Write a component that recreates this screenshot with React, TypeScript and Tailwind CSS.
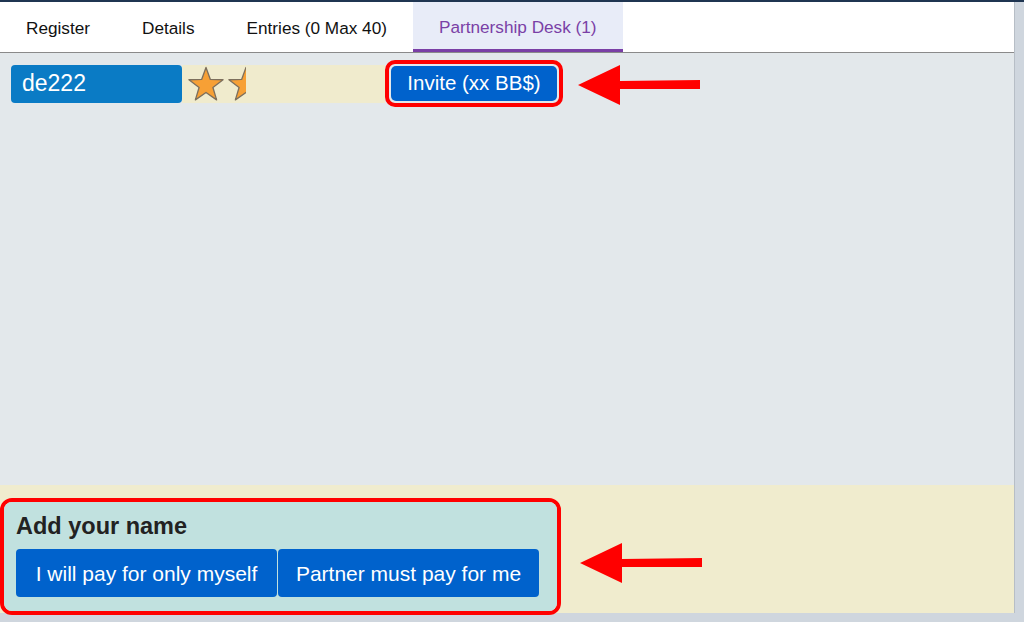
import { ReactNode } from "react";

const tabs = [
  { label: "Register", active: false },
  { label: "Details", active: false },
  { label: "Entries (0 Max 40)", active: false },
  { label: "Partnership Desk (1)", active: true },
];

function Star({ className = "" }: { className?: string }) {
  return (
    <svg viewBox="0 0 40 38" className={className}>
      <polygon
        points="20,1.5 24.6,14.2 38,14.5 27.3,22.7 31.2,35.8 20,28 8.8,35.8 12.7,22.7 2,14.5 15.4,14.2"
        fill="#f7a035"
        stroke="#7d6f5c"
        strokeWidth="1.4"
        strokeLinejoin="round"
      />
    </svg>
  );
}

function RedArrow({ className = "" }: { className?: string }) {
  return (
    <svg viewBox="0 0 126 44" className={className}>
      <polygon points="2,22 44,2 44,18 124,17 124,26 44,26 44,42" fill="#ff0000" />
    </svg>
  );
}

function PayButton({ children }: { children: ReactNode }) {
  return (
    <button className="h-[48px] w-[261px] rounded-[4px] bg-[#0062cc] text-white text-[21px]">
      {children}
    </button>
  );
}

export default function App() {
  return (
    <div
      className="relative w-[1024px] h-[622px] overflow-hidden bg-[#cfd6de] flex flex-col"
      style={{ fontFamily: '"Liberation Sans", Arial, sans-serif' }}
    >
      <div className="h-[2px] bg-[#1f3551] shrink-0" />

      <div className="flex flex-1">
        <div className="w-[1015px] flex flex-col border-r border-[#b7bec6]">
          {/* tab strip */}
          <div className="h-[51px] bg-white flex border-b border-[#8a8a8a] shrink-0">
            {tabs.map((t) => (
              <div
                key={t.label}
                className={
                  t.active
                    ? "px-[26px] flex items-center text-[17.2px] text-[#7a3fa6] bg-[#e8ecf8] border-b-[3px] border-[#7a3fa6] pt-[5px]"
                    : "px-[26px] flex items-center text-[17.2px] text-[#111] pt-[3px]"
                }
              >
                {t.label}
              </div>
            ))}
          </div>

          {/* partner list */}
          <div className="flex-1 bg-[#e3e8eb] pt-[7px] pl-[11px]">
            <div className="flex items-center">
              <div className="w-[171px] h-[38px] rounded-[4px] bg-[#0a7bc5] text-white text-[23px] pl-[11px] flex items-center">
                de222
              </div>
              <div className="w-[203px] h-[38px] bg-[#f0ebcd] flex items-center pl-[5px] gap-[2px]">
                <Star className="w-[38px] h-[36px]" />
                <div className="w-[19px] h-[36px] overflow-hidden">
                  <Star className="w-[38px] h-[36px] max-w-none" />
                </div>
              </div>
              <div className="border-[4px] border-[#ff0000] rounded-[10px] p-[2px]">
                <button className="h-[35px] w-[166px] rounded-[5px] bg-[#0062cc] text-white text-[20.5px]">
                  Invite (xx BB$)
                </button>
              </div>
            </div>
          </div>

          {/* add yourself */}
          <div className="h-[128px] bg-[#f0ecce] pt-[13px] shrink-0">
            <div className="w-[561px] h-[117px] border-[4px] border-[#ff0000] rounded-[12px] overflow-hidden">
              <div className="h-full bg-[#c1e1df] px-[12px] pt-[7px]">
                <div className="text-[23.5px] font-bold text-[#222]">Add your name</div>
                <div className="flex gap-[1px] mt-[5px]">
                  <PayButton>I will pay for only myself</PayButton>
                  <PayButton>Partner must pay for me</PayButton>
                </div>
              </div>
            </div>
          </div>
        </div>
      </div>
      <div className="h-[9px] shrink-0" />

      <RedArrow className="absolute left-[576px] top-[63px] w-[126px] h-[44px]" />
      <RedArrow className="absolute left-[578px] top-[541px] w-[126px] h-[44px]" />
    </div>
  );
}
